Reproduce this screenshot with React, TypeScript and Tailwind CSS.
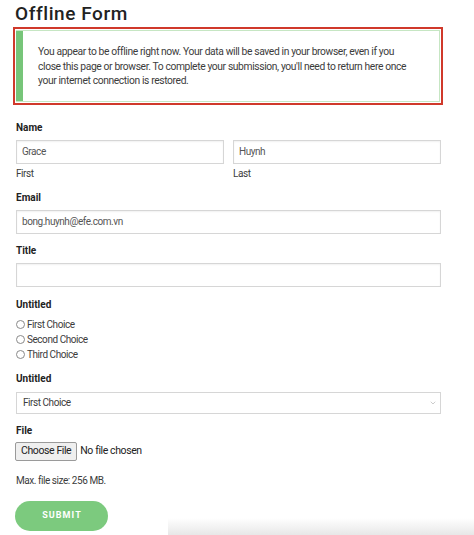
import { ChevronDown } from 'lucide-react';

const label = 'block text-[10px] leading-4 font-bold text-[#222]';
const small = 'text-[10px] tracking-[-0.45px] text-[#3c3c3c]';
const input =
    'block w-full h-[24px] border border-[#d6d6d6] shadow-[inset_0_1px_2px_rgba(0,0,0,0.06)] bg-white px-[5px] text-[10px] tracking-[-0.45px] text-[#555] outline-none';

function Radio({ text }: { text: string }) {
    return (
        <label className={`flex h-[15px] items-center gap-[2px] ${small}`}>
            <span className="h-[9px] w-[9px] rounded-full border border-[#8a8a8a] bg-white" />
            {text}
        </label>
    );
}

export default function App() {
    return (
        <div className="min-h-[535px] bg-white pl-[16px] pr-[33px] font-['Roboto',sans-serif]">
            <h1 className="-ml-px pt-[1px] text-[19px] leading-[26px] font-medium tracking-[0.03em] text-[#222]">
                Offline Form
            </h1>

            {/* offline notice */}
            <div className="-ml-[3px] w-[430px] border-2 border-[#d0392b] p-px">
                <div className="flex border border-l-0 border-[#c6e6c3] bg-white">
                    <div className="w-[7px] shrink-0 bg-[#77c579]" />
                    <p className="pt-[14px] pb-[12px] pl-[15px] pr-[14px] text-[10.3px] leading-[14.5px] tracking-[-0.38px] whitespace-nowrap text-[#3c3c3c]">
                        You appear to be offline right now. Your data will be
                        saved in your browser, even if you
                        <br />
                        close this page or browser. To complete your submission,
                        you'll need to return here once
                        <br />
                        your internet connection is restored.
                    </p>
                </div>
            </div>

            <form className="flex flex-col">
                <span className={`${label} mt-[15px]`}>Name</span>
                <div className="mt-[4px] grid grid-cols-2 gap-[9px]">
                    <div>
                        <input className={input} defaultValue="Grace" />
                        <span className={`mt-[2px] block leading-4 ${small}`}>
                            First
                        </span>
                    </div>
                    <div>
                        <input className={input} defaultValue="Huynh" />
                        <span className={`mt-[2px] block leading-4 ${small}`}>
                            Last
                        </span>
                    </div>
                </div>

                <span className={`${label} mt-[8px]`}>Email</span>
                <input
                    className={`${input} mt-[4px]`}
                    defaultValue="bong.huynh@efe.com.vn"
                />

                <span className={`${label} mt-[9px]`}>Title</span>
                <input className={`${input} mt-[4px]`} />

                <span className={`${label} mt-[10px]`}>Untitled</span>
                <div className="mt-[4px] flex flex-col">
                    <Radio text="First Choice" />
                    <Radio text="Second Choice" />
                    <Radio text="Third Choice" />
                </div>

                <span className={`${label} mt-[9px]`}>Untitled</span>
                <div
                    className={`mt-[5px] flex h-[22px] items-center justify-between border border-[#d6d6d6] bg-white pl-[6px] pr-[3px] ${small}`}
                >
                    <span>First Choice</span>
                    <ChevronDown size={8} strokeWidth={1.5} className="text-[#999]" />
                </div>

                <span className={`${label} mt-[9px]`}>File</span>
                <div className="mt-[3px] flex items-center gap-[3px] text-[10.5px] tracking-[-0.4px] text-[#222]">
                    <span className="-ml-px flex h-[19px] items-center rounded-[2px] border border-[#9a9a9a] bg-[#efefef] px-[5px]">
                        Choose File
                    </span>
                    <span>No file chosen</span>
                </div>

                <span className={`mt-[12px] block leading-4 ${small}`}>
                    Max. file size: 256 MB.
                </span>

                <div className="mt-[12px] flex h-[35px] items-start">
                    <button
                        type="button"
                        className="-ml-px h-[30px] w-[93px] rounded-full bg-[#7cca7e] pl-[1px] text-[9px] font-bold tracking-[0.12em] text-white"
                    >
                        SUBMIT
                    </button>
                    <div className="-mr-[33px] ml-[60px] h-[18px] flex-1 self-end bg-gradient-to-b from-white to-[#e6e6e6]" />
                </div>
            </form>
        </div>
    );
}
